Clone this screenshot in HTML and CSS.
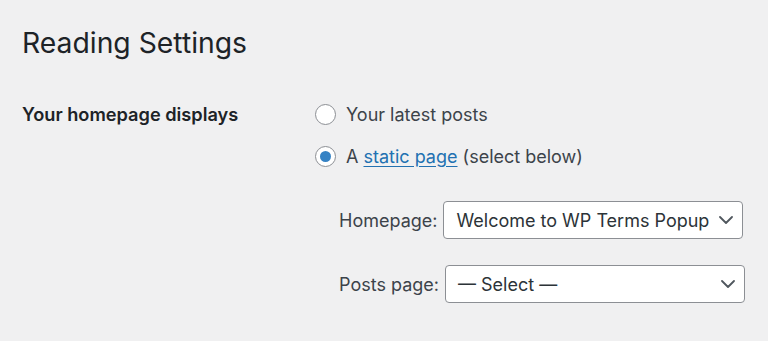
FILE: index.html
```html
<!DOCTYPE html>
<html>
<head>
<meta charset="utf-8">
<link rel="stylesheet" href="styles.css">
</head>
<body>
<div class="wrap">
  <h1 class="title">Reading Settings</h1>
  <div class="row">
    <div class="row-label">Your homepage displays</div>
    <div class="row-field">
      <label class="radio-line">
        <span class="radio"></span>
        <span class="radio-text">Your latest posts</span>
      </label>
      <label class="radio-line">
        <span class="radio checked"></span>
        <span class="radio-text">A <a href="#" class="link">static page</a> (select below)</span>
      </label>
      <div class="page-list">
        <div class="page-item">
          <span class="page-label">Homepage:</span>
          <span class="select select-home">
            <span class="select-value">Welcome to WP Terms Popup</span>
            <svg class="chevron" viewBox="0 0 14 8" width="14" height="8"><path d="M1 1l6 6 6-6" fill="none" stroke="#50575e" stroke-width="1.8" stroke-linecap="round" stroke-linejoin="round"/></svg>
          </span>
        </div>
        <div class="page-item">
          <span class="page-label">Posts page:</span>
          <span class="select select-posts">
            <span class="select-value">— Select —</span>
            <svg class="chevron" viewBox="0 0 14 8" width="14" height="8"><path d="M1 1l6 6 6-6" fill="none" stroke="#50575e" stroke-width="1.8" stroke-linecap="round" stroke-linejoin="round"/></svg>
          </span>
        </div>
      </div>
    </div>
  </div>
</div>
</body>
</html>
```

FILE: styles.css
```css
html, body {
  margin: 0;
  padding: 0;
  background: #f0f0f1;
}
body {
  font-family: Inter, "Liberation Sans", Arial, sans-serif;
  color: #3c434a;
  width: 768px;
  height: 341px;
  overflow: hidden;
}
.wrap {
  padding: 0 0 0 22px;
}
.title {
  margin: 0;
  padding-top: 24px;
  font-size: 28.3px;
  line-height: 38px;
  font-weight: 400;
  color: #1d2327;
}
.row {
  display: flex;
  margin-top: 39px;
}
.row-label {
  width: 293px;
  flex: none;
  font-size: 18.2px;
  line-height: 26px;
  font-weight: 600;
  color: #1d2327;
}
.row-field {
  display: flex;
  flex-direction: column;
}
.radio-line {
  display: flex;
  align-items: center;
  height: 26px;
  margin-bottom: 16px;
  font-size: 18px;
}
.radio {
  box-sizing: border-box;
  width: 21px;
  height: 21px;
  border: 1px solid #8c8f94;
  border-radius: 50%;
  background: #fff;
  margin-right: 10px;
  display: flex;
  align-items: center;
  justify-content: center;
}
.radio.checked::after {
  content: "";
  width: 11px;
  height: 11px;
  border-radius: 50%;
  background: #3582c4;
}
.link {
  color: #2271b1;
  text-decoration: underline;
  text-underline-offset: 3px;
}
.page-list {
  padding-left: 24px;
  margin-top: 16px;
}
.page-item {
  display: flex;
  align-items: center;
  font-size: 18px;
  margin-bottom: 26px;
}
.page-label {
  margin-right: 6px;
}
.select-posts {
  width: 300px;
}
.select {
  box-sizing: border-box;
  width: 300px;
  height: 38px;
  border: 1px solid #8c8f94;
  border-radius: 4px;
  background: #fff;
  display: flex;
  align-items: center;
  justify-content: space-between;
  padding: 0 9px 0 12px;
  color: #2c3338;
}
```
